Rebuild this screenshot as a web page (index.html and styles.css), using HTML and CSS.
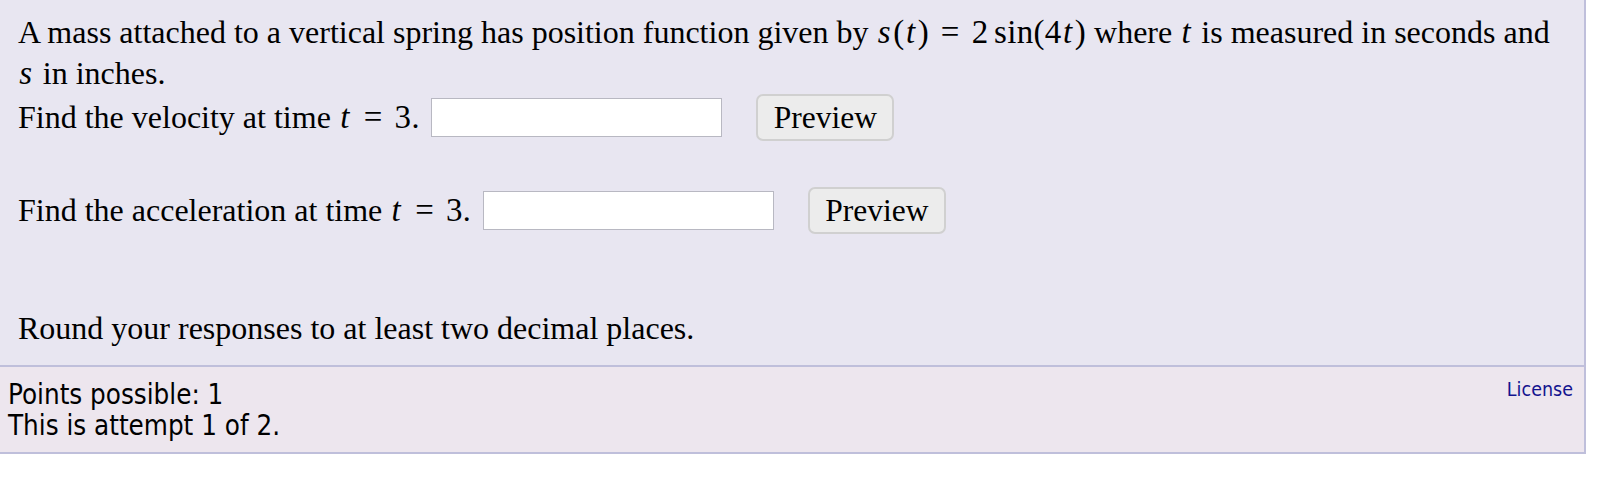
FILE: index.html
```html
<!DOCTYPE html>
<html lang="en">
<head>
<meta charset="utf-8">
<title>Question</title>
<link rel="stylesheet" href="styles.css">
</head>
<body>
<div class="question">
  <div class="body">
    <p class="intro">A mass attached to a vertical spring has position function given by <span class="math"><i>s</i>(<i>t</i>)<span class="rel">=</span>2<span class="thin"></span>sin(4<i>t</i>)</span> where <span class="math"><i>t</i></span> is measured in seconds and<br><span class="math"><i>s</i></span> in inches.</p>
    <div class="row row-first">
      <span class="label">Find the velocity at time <span class="math"><i>t</i><span class="rel">=</span>3</span>.</span>
      <input class="answer" type="text">
      <button class="preview" type="button">Preview</button>
    </div>
    <div class="row row-second">
      <span class="label">Find the acceleration at time <span class="math"><i>t</i><span class="rel">=</span>3</span>.</span>
      <input class="answer" type="text">
      <button class="preview" type="button">Preview</button>
    </div>
    <p class="note">Round your responses to at least two decimal places.</p>
  </div>
  <div class="footer">
    <div class="info">
      <div>Points possible: 1</div>
      <div>This is attempt 1 of 2.</div>
    </div>
    <a class="license" href="#">License</a>
  </div>
</div>
</body>
</html>
```

FILE: styles.css
```css
html, body {
  margin: 0;
  padding: 0;
  background: #ffffff;
}

.question {
  width: 1584px;
  background: #e8e6f1;
  border-right: 2px solid #bfbfdb;
  border-bottom: 2px solid #bfbfdb;
}

.body {
  padding: 12px 0 16px 18px;
  font-family: "Liberation Serif", "Times New Roman", serif;
  font-size: 32px;
  color: #000;
}

.intro {
  margin: 0;
  line-height: 41px;
  white-space: nowrap;
}

.math {
  font-size: 1.03em;
  letter-spacing: 0.01em;
}

.math i {
  font-style: italic;
  padding: 0 0.07em 0 0.04em;
}

.rel {
  margin: 0 0.36em;
}

.thin {
  display: inline-block;
  width: 0.17em;
}

.row {
  display: flex;
  align-items: center;
  height: 47px;
}

.row-second {
  margin-top: 46px;
}

.label {
  white-space: nowrap;
}

.answer {
  box-sizing: border-box;
  width: 291px;
  height: 39px;
  margin: 0 0 0 12px;
  padding: 0 4px;
  background: #ffffff;
  border: 1px solid #b8b8c2;
  border-radius: 0;
  font-size: 28px;
  outline: none;
}

.preview {
  box-sizing: border-box;
  width: 138px;
  height: 47px;
  margin-left: 34px;
  padding: 0;
  background: #ececec;
  border: 2px solid #d0d0d0;
  border-radius: 7px;
  font-family: "Liberation Serif", "Times New Roman", serif;
  font-size: 31.5px;
  color: #000;
}

.note {
  margin: 74px 0 0;
  line-height: 41px;
}

.footer {
  display: flex;
  justify-content: space-between;
  align-items: flex-start;
  padding: 12px 11px 11px 8px;
  background: #ede6ee;
  border-top: 2px solid #bfbfdb;
  font-family: "DejaVu Sans", sans-serif;
  font-stretch: condensed;
}

.info {
  font-size: 27.5px;
  line-height: 31px;
  color: #000;
}

.license {
  margin-top: 0;
  font-size: 19.5px;
  line-height: 22px;
  color: #14148f;
  text-decoration: none;
}
```
